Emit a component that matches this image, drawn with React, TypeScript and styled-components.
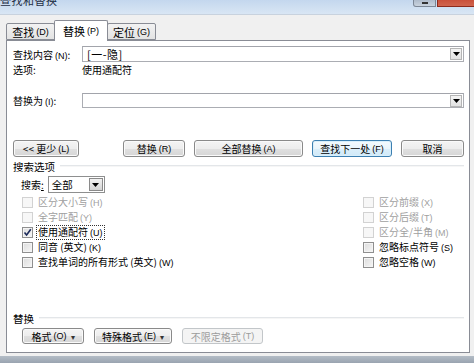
import React from "react"
import styled, { createGlobalStyle, css } from "styled-components"

const GlobalStyle = createGlobalStyle`
  html, body {
    margin: 0;
    padding: 0;
    background: #f0f0f0;
  }
  body {
    font-family: "Noto Sans CJK SC", "Liberation Sans", sans-serif;
    font-size: 10px;
    color: #000;
  }
`

const FindReplaceDialog: React.FC = () => {
  return (
    <StyledWindow>
      <StyledTitleBar>
        <StyledTitle>{"查找和替换"}</StyledTitle>
        <StyledControls>
          <StyledMinimize>
            <span />
          </StyledMinimize>
          <StyledClose />
        </StyledControls>
      </StyledTitleBar>

      <StyledTabRow>
        <StyledTab>{"查找"}<Key>{"(D)"}</Key></StyledTab>
        <StyledTab $active>{"替换"}<Key>{"(P)"}</Key></StyledTab>
        <StyledTab>{"定位"}<Key>{"(G)"}</Key></StyledTab>
      </StyledTabRow>

      <StyledPanel>
        <StyledFieldRow>
          <StyledLabel>{"查找内容"}<Key>{"(N)"}</Key>{":"}</StyledLabel>
          <ComboBox value="[一-隐]" />
        </StyledFieldRow>
        <StyledOptionsRow>
          <StyledLabel>{"选项:"}</StyledLabel>
          <span>{"使用通配符"}</span>
        </StyledOptionsRow>
        <StyledFieldRow $top={17} $height={15}>
          <StyledLabel>{"替换为"}<Key>{"(I)"}</Key>{":"}</StyledLabel>
          <ComboBox value="" />
        </StyledFieldRow>

        <StyledButtonRow>
          <StyledButton $width={66}>{"<< 更少"}<Key>{"(L)"}</Key></StyledButton>
          <StyledButtonGroup>
            <StyledButton $width={62}>{"替换"}<Key>{"(R)"}</Key></StyledButton>
            <StyledButton $width={109}>{"全部替换"}<Key>{"(A)"}</Key></StyledButton>
            <StyledButton $width={80} $focused>{"查找下一处"}<Key>{"(F)"}</Key></StyledButton>
            <StyledButton $width={63}>{"取消"}</StyledButton>
          </StyledButtonGroup>
        </StyledButtonRow>

        <StyledGroupHeader $top={3}>{"搜索选项"}</StyledGroupHeader>
        <StyledSearchRow>
          <span>{"搜索"}<u>{":"}</u></span>
          <StyledSelect>
            <span>{"全部"}</span>
            <StyledArrowBox $dark>
              <Arrow />
            </StyledArrowBox>
          </StyledSelect>
        </StyledSearchRow>

        <StyledCheckGrid>
          <CheckItem label="区分大小写" hotkey="(H)" disabled />
          <CheckItem label="全字匹配" hotkey="(Y)" disabled />
          <CheckItem label="使用通配符" hotkey="(U)" checked focused />
          <CheckItem label="同音 (英文)" hotkey="(K)" />
          <CheckItem label="查找单词的所有形式 (英文)" hotkey="(W)" />
          <CheckItem label="区分前缀" hotkey="(X)" disabled />
          <CheckItem label="区分后缀" hotkey="(T)" disabled />
          <CheckItem label="区分全/半角" hotkey="(M)" disabled />
          <CheckItem label="忽略标点符号" hotkey="(S)" />
          <CheckItem label="忽略空格" hotkey="(W)" />
        </StyledCheckGrid>

        <StyledGroupHeader $top={42}>{"替换"}</StyledGroupHeader>
        <StyledBottomButtons>
          <StyledButton $width={62}>{"格式"}<Key>{"(O)"}</Key><Caret>{"▾"}</Caret></StyledButton>
          <StyledButton $width={78}>{"特殊格式"}<Key>{"(E)"}</Key><Caret>{"▾"}</Caret></StyledButton>
          <StyledButton $width={81} disabled>{"不限定格式"}<Key>{"(T)"}</Key></StyledButton>
        </StyledBottomButtons>
      </StyledPanel>
      <StyledFrameBottom />
    </StyledWindow>
  )
}

const Key: React.FC<{ children: React.ReactNode }> = ({ children }) => (
  <StyledKey>{children}</StyledKey>
)

const Arrow: React.FC = () => (
  <svg width="7" height="4" viewBox="0 0 7 4">
    <path d="M0 0 L7 0 L3.5 4 Z" fill="#000" />
  </svg>
)

const ComboBox: React.FC<{ value: string }> = ({ value }) => (
  <StyledCombo>
    <StyledComboText>{value}</StyledComboText>
    <StyledArrowBox>
      <Arrow />
    </StyledArrowBox>
  </StyledCombo>
)

type CheckProps = {
  label: string
  hotkey: string
  checked?: boolean
  disabled?: boolean
  focused?: boolean
}

const CheckItem: React.FC<CheckProps> = ({ label, hotkey, checked, disabled, focused }) => (
  <StyledCheckRow $disabled={disabled}>
    <StyledCheckBox $disabled={disabled}>
      {checked && (
        <svg width="9" height="9" viewBox="0 0 9 9">
          <path d="M1.5 4.5 L3.6 7 L7.8 1.2" stroke="#1c2a5a" strokeWidth="1.6" fill="none" />
        </svg>
      )}
    </StyledCheckBox>
    <StyledCheckLabel $focused={focused}>
      {label}
      <StyledKey>{hotkey}</StyledKey>
    </StyledCheckLabel>
  </StyledCheckRow>
)

const StyledWindow = styled.div`
  display: flex;
  flex-direction: column;
  width: 474px;
  height: 363px;
  overflow: hidden;
  background: #f0f0f0;
`

const StyledTitleBar = styled.div`
  display: flex;
  justify-content: space-between;
  align-items: flex-start;
  height: 15px;
  flex: none;
  overflow: hidden;
  background: linear-gradient(#c4d7ee, #d9e6f4);
  border-bottom: 1px solid #c8d2de;
  box-sizing: border-box;
`

const StyledTitle = styled.div`
  margin: -7px 0 0 0;
  font-size: 11px;
  line-height: 14px;
  color: #1e2e44;
  letter-spacing: 0.5px;
`

const StyledControls = styled.div`
  display: flex;
  gap: 1px;
`

const StyledMinimize = styled.div`
  display: flex;
  justify-content: center;
  width: 23px;
  height: 7px;
  background: linear-gradient(#aebbcb, #c9d3de);
  border: 1px solid #7c8796;
  border-top: none;
  border-radius: 0 0 0 3px;
  box-sizing: border-box;

  span {
    width: 6px;
    height: 2px;
    margin-top: 2px;
    background: #333;
  }
`

const StyledClose = styled.div`
  width: 37px;
  height: 7px;
  background: linear-gradient(#c9503a, #d0644d);
  border: 1px solid #8c2a1c;
  border-top: none;
  border-right: none;
  box-sizing: border-box;
`

const StyledTabRow = styled.div`
  display: flex;
  align-items: flex-end;
  height: 25px;
  flex: none;
  padding-left: 6px;
  position: relative;
  z-index: 1;
`

const StyledTab = styled.div<{ $active?: boolean }>`
  display: flex;
  align-items: center;
  justify-content: center;
  box-sizing: border-box;
  height: ${(p) => (p.$active ? 21 : 17)}px;
  width: ${(p) => (p.$active ? 54 : 49)}px;
  margin: 0 ${(p) => (p.$active ? -1 : 0)}px ${(p) => (p.$active ? -1 : 0)}px;
  padding-top: ${(p) => (p.$active ? 0 : 1)}px;
  border: 1px solid #898c95;
  border-bottom: ${(p) => (p.$active ? "none" : "1px solid #898c95")};
  border-radius: 2px 2px 0 0;
  background: ${(p) => (p.$active ? "#fff" : "linear-gradient(#f2f2f2, #e3e3e3)")};
  font-size: 11px;
  position: relative;
  z-index: ${(p) => (p.$active ? 2 : 1)};
`

const StyledPanel = styled.div`
  display: flex;
  flex-direction: column;
  box-sizing: border-box;
  width: 464px;
  height: 313px;
  flex: none;
  margin-left: 6px;
  padding: 0 5px 0 6px;
  background: #fff;
  border: 1px solid #898c95;
`

const StyledFrameBottom = styled.div`
  flex: 1;
  margin-top: 3px;
  background: linear-gradient(#b3bcc6, #9aa4b0);
`

const StyledKey = styled.span`
  font-family: "Liberation Sans", sans-serif;
  font-size: 9px;
  margin-left: 2px;
`

const StyledFieldRow = styled.div<{ $top?: number; $height?: number }>`
  display: flex;
  align-items: center;
  margin-top: ${(p) => p.$top ?? 5}px;
  height: ${(p) => p.$height ?? 16}px;
`

const StyledOptionsRow = styled.div`
  display: flex;
  align-items: center;
  height: 14px;
`

const StyledLabel = styled.div`
  width: 69px;
  flex: none;
  white-space: nowrap;
`

const StyledCombo = styled.div`
  display: flex;
  align-items: center;
  flex: 1;
  height: 100%;
  box-sizing: border-box;
  border: 1px solid #abadb3;
  border-top-color: #a2a4ab;
  padding: 0 1px 0 4px;
`

const StyledComboText = styled.div`
  flex: 1;
  font-size: 11px;
  letter-spacing: 0.5px;
`

const StyledArrowBox = styled.div<{ $dark?: boolean }>`
  display: flex;
  align-items: center;
  justify-content: center;
  width: 12px;
  height: 12px;
  box-sizing: border-box;
  border: 1px solid ${(p) => (p.$dark ? "#8a8a8a" : "#b5b5b5")};
  background: ${(p) => (p.$dark ? "linear-gradient(#f2f2f2, #d4d4d4)" : "linear-gradient(#f4f4f4, #e2e2e2)")};
`

const StyledButtonRow = styled.div`
  display: flex;
  justify-content: space-between;
  margin-top: 32px;
  height: 17px;
`

const StyledButtonGroup = styled.div`
  display: flex;
  gap: 9px;
`

const StyledButton = styled.button<{ $width: number; $focused?: boolean }>`
  display: flex;
  align-items: center;
  justify-content: center;
  width: ${(p) => p.$width}px;
  height: 17px;
  padding: 0;
  box-sizing: border-box;
  font-family: "Noto Sans CJK SC", "Liberation Sans", sans-serif;
  font-size: 10px;
  color: #000;
  border-radius: 3px;
  border: 1px solid #8a8a8a;
  box-shadow: inset 0 0 0 1px #fafafa;
  background: linear-gradient(#f4f4f4 0%, #ededed 50%, #e0e0e0 50%, #d6d6d6 100%);

  ${(p) =>
    p.$focused &&
    css`
      border-color: #3c7fb1;
      box-shadow: inset 0 0 0 1px #d8effb;
      background: linear-gradient(#f4fafe 0%, #e9f5fc 50%, #dceffa 50%, #d0e9f8 100%);
    `}

  &:disabled {
    color: #9c9c9c;
    border-color: #c2c6c9;
    background: #f4f4f4;
    box-shadow: none;
  }
`

const Caret = styled.span`
  font-size: 8px;
  margin-left: 4px;
  color: #333;
`

const StyledGroupHeader = styled.div<{ $top: number }>`
  display: flex;
  align-items: center;
  gap: 5px;
  margin-top: ${(p) => p.$top}px;
  height: 12px;
  font-size: 10.5px;

  &::after {
    content: "";
    flex: 1;
    height: 1px;
    background: #e3e6e9;
    border-bottom: 1px solid #f6f6f6;
  }
`

const StyledSearchRow = styled.div`
  display: flex;
  align-items: center;
  gap: 4px;
  margin-top: 4px;
  padding-left: 8px;
  height: 17px;
`

const StyledSelect = styled.div`
  display: flex;
  align-items: center;
  justify-content: space-between;
  width: 57px;
  height: 17px;
  box-sizing: border-box;
  border: 1px solid #8e8f8f;
  padding: 0 1px 0 3px;
  font-size: 10.5px;

  ${StyledArrowBox} {
    width: 14px;
    height: 13px;
  }
`

const StyledCheckGrid = styled.div`
  display: grid;
  grid-template-rows: repeat(5, 15px);
  grid-template-columns: 341px 1fr;
  grid-auto-flow: column;
  margin-top: 2px;
  padding-left: 9px;
`

const StyledCheckRow = styled.div<{ $disabled?: boolean }>`
  display: flex;
  align-items: center;
  gap: 3px;
  color: ${(p) => (p.$disabled ? "#a0a0a0" : "#000")};
  white-space: nowrap;
`

const StyledCheckBox = styled.div<{ $disabled?: boolean }>`
  display: flex;
  align-items: center;
  justify-content: center;
  width: 11px;
  height: 11px;
  box-sizing: border-box;
  border: 1px solid ${(p) => (p.$disabled ? "#d2d2d2" : "#8f8f8f")};
  background: ${(p) =>
    p.$disabled ? "#f7f7f7" : "linear-gradient(135deg, #dcdcdc, #f6f6f6)"};
  box-shadow: ${(p) => (p.$disabled ? "none" : "inset 0 0 0 1px #f4f4f4")};
`

const StyledCheckLabel = styled.span<{ $focused?: boolean }>`
  padding: 0 1px;
  border: 1px dotted ${(p) => (p.$focused ? "#333" : "transparent")};
  line-height: 11px;
`

const StyledBottomButtons = styled.div`
  display: flex;
  gap: 10px;
  margin-top: 4px;
  padding-left: 9px;

  ${StyledButton} {
    height: 16px;
  }
`

const App: React.FC = () => (
  <>
    <GlobalStyle />
    <FindReplaceDialog />
  </>
)

export default App
